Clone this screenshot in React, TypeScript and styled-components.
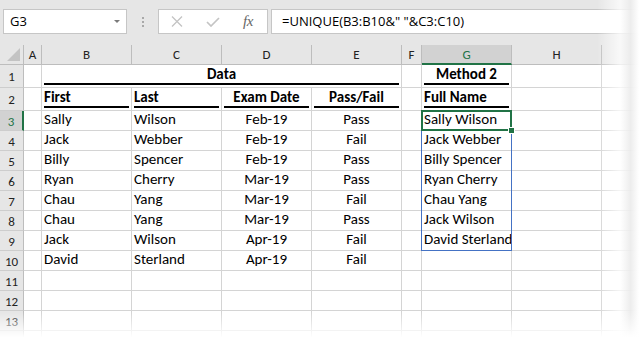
import React from 'react'
import styled, { createGlobalStyle } from 'styled-components'

const CELL_FONT = `Carlito, Lato, 'Liberation Sans', sans-serif`
const UI_FONT = `'Open Sans', 'Noto Sans', 'Liberation Sans', sans-serif`

const GREEN = '#217346'
const BLUE = '#4472c4'
const GRID = '#d4d4d4'
const HEAD_BG = '#e6e6e6'
const HEAD_LINE = '#bdbdbd'

interface IRow {
	first: string
	last: string
	date: string
	result: string
	full: string
}

const rows: IRow[] = [
	{ first: 'Sally', last: 'Wilson', date: 'Feb-19', result: 'Pass', full: 'Sally Wilson' },
	{ first: 'Jack', last: 'Webber', date: 'Feb-19', result: 'Fail', full: 'Jack Webber' },
	{ first: 'Billy', last: 'Spencer', date: 'Feb-19', result: 'Pass', full: 'Billy Spencer' },
	{ first: 'Ryan', last: 'Cherry', date: 'Mar-19', result: 'Pass', full: 'Ryan Cherry' },
	{ first: 'Chau', last: 'Yang', date: 'Mar-19', result: 'Fail', full: 'Chau Yang' },
	{ first: 'Chau', last: 'Yang', date: 'Mar-19', result: 'Pass', full: 'Jack Wilson' },
	{ first: 'Jack', last: 'Wilson', date: 'Apr-19', result: 'Fail', full: 'David Sterland' },
	{ first: 'David', last: 'Sterland', date: 'Apr-19', result: 'Fail', full: '' },
]

const columns = ['A', 'B', 'C', 'D', 'E', 'F', 'G', 'H', '']

// пустые строки под таблицей (14-я уходит под затухание)
const emptyRows = [11, 12, 13, 0]

export default function App() {
	return (
		<>
			<GlobalStyle />
			<Frame>
				<FormulaBar>
					<NameBox>
						G3
						<DropArrow />
					</NameBox>
					<Grip>
						<GripDot />
						<GripDot />
						<GripDot />
					</Grip>
					<FxBox>
						<svg width='12' height='11' viewBox='0 0 12 11'>
							<path d='M1 0.5 L11 10.5 M11 0.5 L1 10.5' stroke='#c4c4c4' strokeWidth='1.3' fill='none' />
						</svg>
						<svg width='14' height='10' viewBox='0 0 14 10'>
							<path d='M1 5 L5 9 L13 1' stroke='#c4c4c4' strokeWidth='1.7' fill='none' />
						</svg>
						<FxLabel>fx</FxLabel>
					</FxBox>
					<FormulaInput>=UNIQUE(B3:B10&amp;" "&amp;C3:C10)</FormulaInput>
				</FormulaBar>

				<Sheet>
					<Corner>
						<svg width='13' height='13' viewBox='0 0 13 13'>
							<path d='M0 13 L13 13 L13 0 Z' fill='#c3c3c3' />
						</svg>
					</Corner>
					{columns.map((c, i) => (
						<ColHead key={i} $active={c === 'G'}>
							{c}
						</ColHead>
					))}

					<RowHead>1</RowHead>
					<Cell />
					<Cell $span={4}>
						<Text $center $bold $rule>
							Data
						</Text>
					</Cell>
					<Cell />
					<Cell>
						<Text $center $bold $rule>
							Method 2
						</Text>
					</Cell>
					<Cell />
					<Cell />

					<RowHead>2</RowHead>
					<Cell />
					<Cell>
						<Text $bold $rule>
							First
						</Text>
					</Cell>
					<Cell>
						<Text $bold $rule>
							Last
						</Text>
					</Cell>
					<Cell>
						<Text $center $bold $rule>
							Exam Date
						</Text>
					</Cell>
					<Cell>
						<Text $center $bold $rule>
							Pass/Fail
						</Text>
					</Cell>
					<Cell />
					<Cell>
						<Text $bold $rule>
							Full Name
						</Text>
					</Cell>
					<Cell />
					<Cell />

					{rows.map((r, i) => (
						<React.Fragment key={i}>
							<RowHead $active={i === 0}>{i + 3}</RowHead>
							<Cell />
							<Cell>
								<Text>{r.first}</Text>
							</Cell>
							<Cell>
								<Text>{r.last}</Text>
							</Cell>
							<Cell>
								<Text $center>{r.date}</Text>
							</Cell>
							<Cell>
								<Text $center>{r.result}</Text>
							</Cell>
							<Cell />
							<Cell $anchor={i === 0}>
								{i === 0 && (
									<>
										<SpillFrame />
										<Selection>
											<FillHandle />
										</Selection>
									</>
								)}
								<Text>{r.full}</Text>
							</Cell>
							<Cell />
							<Cell />
						</React.Fragment>
					))}

					{emptyRows.map((n, k) => (
						<React.Fragment key={k}>
							<RowHead>{n || ''}</RowHead>
							{columns.map((c, i) => (
								<Cell key={i} />
							))}
						</React.Fragment>
					))}
				</Sheet>

				<RightFade />
				<BottomFade />
			</Frame>
		</>
	)
}

const GlobalStyle = createGlobalStyle`
	html, body {
		margin: 0;
		padding: 0;
		background: #ffffff;
	}
`

const Frame = styled.div`
	position: relative;
	width: 639px;
	height: 342px;
	overflow: hidden;
	background: #fff;
	font-family: ${CELL_FONT};
`

const FormulaBar = styled.div`
	display: flex;
	align-items: flex-start;
	height: 45px;
	padding-top: 9px;
	box-sizing: border-box;
	background: ${HEAD_BG};
`

const NameBox = styled.div`
	display: flex;
	align-items: center;
	justify-content: space-between;
	width: 124px;
	height: 25px;
	margin-left: 3px;
	padding: 0 6px 0 6px;
	box-sizing: border-box;
	background: #fff;
	border: 1px solid #c6c6c6;
	font: 13px/1 ${UI_FONT};
	color: #000;
`

const DropArrow = styled.span`
	width: 0;
	height: 0;
	border-left: 3px solid transparent;
	border-right: 3px solid transparent;
	border-top: 3px solid #7a7a7a;
`

const Grip = styled.div`
	display: flex;
	flex-direction: column;
	gap: 2px;
	margin: 8px 14px 0 15px;
`

const GripDot = styled.span`
	width: 2px;
	height: 2px;
	background: #a8a8a8;
`

const FxBox = styled.div`
	display: flex;
	align-items: center;
	gap: 23px;
	width: 110px;
	height: 25px;
	padding-left: 12px;
	box-sizing: border-box;
	background: #fff;
	border: 1px solid #c6c6c6;
`

const FxLabel = styled.span`
	font: italic 15px/1 'Liberation Serif', serif;
	color: #666;
	letter-spacing: -0.5px;
`

const FormulaInput = styled.div`
	display: flex;
	align-items: center;
	flex: 1;
	height: 25px;
	margin-left: 3px;
	padding-left: 10px;
	box-sizing: border-box;
	background: #fff;
	border: 1px solid #c6c6c6;
	border-right: none;
	font: 13px/1 ${UI_FONT};
	color: #000;
	white-space: pre;
`

const Sheet = styled.div`
	display: grid;
	grid-template-columns: 24px 18px 90px 90px 90px 90px 20px 90px 90px 1fr;
	grid-template-rows: 20px 23px 23px repeat(12, 20px);
	background: #fff;
`

const Corner = styled.div`
	display: flex;
	align-items: flex-end;
	justify-content: flex-end;
	padding: 0 3px 3px 0;
	background: ${HEAD_BG};
	border-right: 1px solid ${HEAD_LINE};
	border-bottom: 1px solid ${HEAD_LINE};
`

const ColHead = styled.div<{ $active?: boolean }>`
	display: flex;
	align-items: center;
	justify-content: center;
	background: ${p => (p.$active ? '#d2d2d2' : HEAD_BG)};
	color: ${p => (p.$active ? GREEN : '#222')};
	border-right: 1px solid ${HEAD_LINE};
	border-bottom: ${p => (p.$active ? `2px solid ${GREEN}` : `1px solid ${HEAD_LINE}`)};
	font-size: 13px;
`

const RowHead = styled.div<{ $active?: boolean }>`
	display: flex;
	align-items: center;
	justify-content: center;
	padding-top: 1px;
	background: ${p => (p.$active ? '#d2d2d2' : HEAD_BG)};
	color: ${p => (p.$active ? GREEN : '#222')};
	border-right: ${p => (p.$active ? `2px solid ${GREEN}` : `1px solid ${HEAD_LINE}`)};
	border-bottom: 1px solid #cdcdcd;
	font-size: 13px;
`

const Cell = styled.div<{ $span?: number; $anchor?: boolean }>`
	position: ${p => (p.$anchor ? 'relative' : 'static')};
	grid-column: span ${p => p.$span || 1};
	display: flex;
	align-items: flex-end;
	min-width: 0;
	padding: 0 2px 2px;
	border-right: 1px solid ${GRID};
	border-bottom: 1px solid ${GRID};
	font-size: 15px;
	line-height: 16px;
	color: #000;
	white-space: nowrap;
`

const Text = styled.span<{ $center?: boolean; $bold?: boolean; $rule?: boolean }>`
	flex: 1;
	padding-bottom: 1px;
	text-align: ${p => (p.$center ? 'center' : 'left')};
	font-weight: ${p => (p.$bold ? 700 : 400)};
	border-bottom: ${p => (p.$rule ? '2px solid #000' : 'none')};
`

const SpillFrame = styled.div`
	position: absolute;
	top: -1px;
	left: -1px;
	right: -1px;
	height: 141px;
	border: 1px solid ${BLUE};
	box-sizing: border-box;
	pointer-events: none;
`

const Selection = styled.div`
	position: absolute;
	top: -1px;
	left: -1px;
	right: -1px;
	bottom: -1px;
	border: 2px solid ${GREEN};
	z-index: 2;
	pointer-events: none;
`

const FillHandle = styled.span`
	position: absolute;
	right: -5px;
	bottom: -5px;
	width: 5px;
	height: 5px;
	background: ${GREEN};
	border: 1px solid #fff;
`

const RightFade = styled.div`
	position: absolute;
	top: 0;
	right: 0;
	bottom: 0;
	width: 42px;
	background: linear-gradient(
		to right,
		rgba(255, 255, 255, 0) 0%,
		rgba(255, 255, 255, 0.75) 55%,
		rgba(236, 236, 236, 0.95) 80%,
		rgba(255, 255, 255, 1) 100%
	);
	pointer-events: none;
`

const BottomFade = styled.div`
	position: absolute;
	left: 0;
	right: 0;
	bottom: 0;
	height: 30px;
	background: linear-gradient(to bottom, rgba(255, 255, 255, 0), #fff 85%);
	pointer-events: none;
`
